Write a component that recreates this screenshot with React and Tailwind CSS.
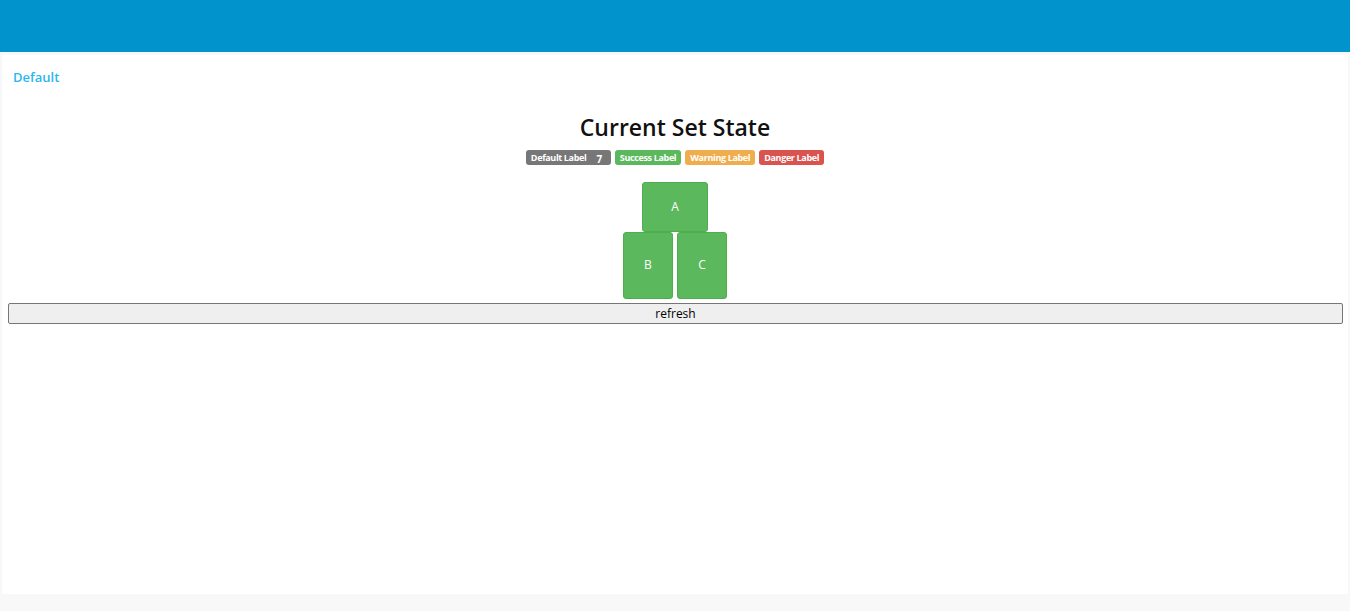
import React from 'react';

const font = { fontFamily: '"Open Sans", "Noto Sans", sans-serif' };

const Label = ({ className, children }) => (
  <span
    className={`inline-flex h-[15px] items-center rounded-[3px] px-[5px] text-[9px] font-bold leading-none tracking-[-0.35px] text-white ${className}`}
  >
    {children}
  </span>
);

const Box = ({ className, children }) => (
  <div
    className={`flex items-center justify-center rounded-[3px] border border-[#4cae4c] bg-[#5cb85c] text-[12px] text-white ${className}`}
  >
    {children}
  </div>
);

export default function App() {
  return (
    <div className="min-h-[611px] bg-[#f8f8f8]" style={font}>
      <header className="h-[52px] bg-[#0093cc]" />
      <main className="mx-[2px] mt-[3px] h-[539px] bg-white">
        <div className="px-[11px] pt-[13px] text-[13px] font-semibold text-[#2bb6f0]">Default</div>

        <div className="mt-[24px] flex flex-col items-center">
          <h1 className="text-[23px] font-semibold leading-[30px] text-[#111]">Current Set State</h1>
          <div className="mt-[8px] flex gap-[4px]">
            <Label className="bg-[#777777]">
              Default Label
              <span className="ml-[6px] mt-[3px] rounded-[6px] bg-[#777777] px-[4px] text-[10px]">7</span>
            </Label>
            <Label className="bg-[#5cb85c]">Success Label</Label>
            <Label className="bg-[#f0ad4e]">Warning Label</Label>
            <Label className="bg-[#d9534f]">Danger Label</Label>
          </div>

          <div className="mt-[17px] flex flex-col items-center">
            <Box className="h-[50px] w-[66px]">A</Box>
            <div className="flex gap-[4px]">
              <Box className="h-[67px] w-[50px]">B</Box>
              <Box className="h-[67px] w-[50px]">C</Box>
            </div>
          </div>
        </div>

        <div className="pl-[6px] pr-[5px] pt-[1px]">
          <button className="h-[21px] w-full rounded-[2px] border border-[#767676] bg-[#efefef] text-[12px] leading-none text-black">
            refresh
          </button>
        </div>
      </main>
    </div>
  );
}
